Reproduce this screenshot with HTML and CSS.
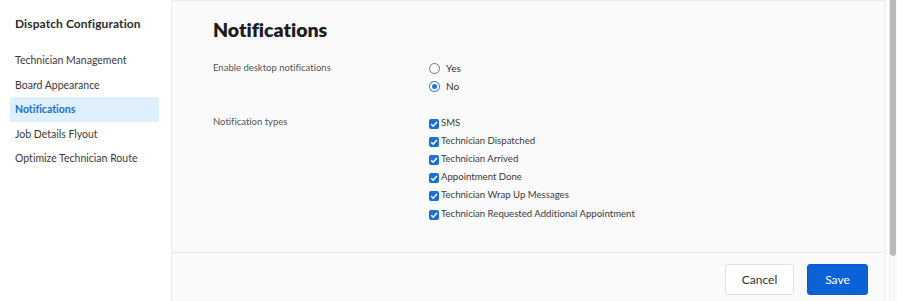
FILE: index.html
```html
<!DOCTYPE html>
<html>
<head>
<meta charset="utf-8">
<link rel="stylesheet" href="styles.css">
</head>
<body>
<div class="app">
  <aside class="sidebar">
    <div class="side-title">Dispatch Configuration</div>
    <nav class="side-nav">
      <a class="side-item">Technician Management</a>
      <a class="side-item">Board Appearance</a>
      <a class="side-item active">Notifications</a>
      <a class="side-item">Job Details Flyout</a>
      <a class="side-item">Optimize Technician Route</a>
    </nav>
  </aside>
  <main class="main">
    <div class="content">
      <h1 class="heading">Notifications</h1>
      <div class="row">
        <div class="label">Enable desktop notifications</div>
        <div class="options radios">
          <label class="opt"><span class="radio"></span>Yes</label>
          <label class="opt"><span class="radio on"></span>No</label>
        </div>
      </div>
      <div class="row row2">
        <div class="label">Notification types</div>
        <div class="options checks">
          <label class="chk"><span class="box"><svg viewBox="0 0 10 10"><path d="M2.2 5.2 L4.2 7.2 L7.9 3" /></svg></span>SMS</label>
          <label class="chk"><span class="box"><svg viewBox="0 0 10 10"><path d="M2.2 5.2 L4.2 7.2 L7.9 3" /></svg></span>Technician Dispatched</label>
          <label class="chk"><span class="box"><svg viewBox="0 0 10 10"><path d="M2.2 5.2 L4.2 7.2 L7.9 3" /></svg></span>Technician Arrived</label>
          <label class="chk"><span class="box"><svg viewBox="0 0 10 10"><path d="M2.2 5.2 L4.2 7.2 L7.9 3" /></svg></span>Appointment Done</label>
          <label class="chk"><span class="box"><svg viewBox="0 0 10 10"><path d="M2.2 5.2 L4.2 7.2 L7.9 3" /></svg></span>Technician Wrap Up Messages</label>
          <label class="chk"><span class="box"><svg viewBox="0 0 10 10"><path d="M2.2 5.2 L4.2 7.2 L7.9 3" /></svg></span>Technician Requested Additional Appointment</label>
        </div>
      </div>
    </div>
    <div class="footer">
      <button class="btn cancel">Cancel</button>
      <button class="btn save">Save</button>
    </div>
  </main>
  <div class="gutter"></div>
  <div class="scrollbar"><div class="thumb"></div></div>
</div>
</body>
</html>
```
FILE: styles.css
```css
html, body { margin: 0; padding: 0; }
body {
  font-family: Lato, "Noto Sans", sans-serif;
  font-variant-ligatures: none;
  color: #333;
  background: #fff;
  width: 897px;
  height: 301px;
  overflow: hidden;
}
.app {
  display: flex;
  height: 301px;
}
.sidebar {
  flex: none;
  border-right: 1px solid #ececec;
  background: #fff;
  box-sizing: border-box;
  width: 172px;
  padding: 16px 12px 0 10px;
}
.side-title {
  font-size: 12px;
  font-weight: 700;
  color: #2b2b2b;
  padding-left: 5px;
  line-height: 16px;
  letter-spacing: 0.1px;
}
.side-nav {
  margin-top: 16px;
  display: flex;
  flex-direction: column;
}
.side-item {
  display: block;
  font-size: 10.5px;
  color: #3a3a3a;
  line-height: 24.6px;
  height: 24.6px;
  padding-left: 5px;
  border-radius: 2px;
}
.side-item.active {
  background: #dff0fd;
  color: #1a6fd8;
  font-weight: 700;
}
.main {
  flex: none;
  width: 714px;
  display: flex;
  flex-direction: column;
  background: #fafafa;
  border-top: 1px solid #ececec;
  border-right: 1px solid #ececec;
  box-sizing: border-box;
}
.content {
  height: 252px;
  box-sizing: border-box;
  padding: 15px 0 0 41px;
  border-bottom: 1px solid #e8e8e8;
}
.heading {
  margin: 0;
  font-size: 19.5px;
  font-weight: 800;
  line-height: 28px;
  color: #1d1d1d;
}
.row {
  display: flex;
  margin-top: 17px;
}
.row2 { margin-top: 20px; }
.label {
  width: 216px;
  flex: none;
  font-size: 9.5px;
  color: #555;
  line-height: 14px;
}
.options {
  display: flex;
  flex-direction: column;
}
.opt {
  display: flex;
  align-items: center;
  font-size: 10px;
  color: #333;
  height: 18px;
}
.radios { margin-top: -2px; }
.radio {
  width: 9px;
  height: 9px;
  border: 1px solid #777;
  border-radius: 50%;
  margin-right: 6px;
  background: #fff;
  box-sizing: content-box;
  position: relative;
}
.radio.on {
  border-color: #1a73e8;
  background: #fff;
}
.radio.on::after {
  content: "";
  position: absolute;
  left: 2px; top: 2px;
  width: 5px; height: 5px;
  border-radius: 50%;
  background: #1a73e8;
}
.checks { margin-top: -2px; }
.chk {
  display: flex;
  align-items: center;
  height: 18.2px;
  font-size: 9.6px;
  color: #3a3a3a;
}
.box {
  width: 10px;
  height: 10px;
  border-radius: 2px;
  background: #1a6fd8;
  margin-right: 2px;
  margin-top: 3px;
  display: flex;
}
.box svg {
  width: 10px;
  height: 10px;
}
.box path {
  fill: none;
  stroke: #fff;
  stroke-width: 1.6;
}
.footer {
  flex: 1;
  display: flex;
  justify-content: flex-end;
  align-items: flex-start;
  padding: 11px 17px 0 0;
  gap: 13px;
}
.btn {
  height: 31px;
  border-radius: 3px;
  font-family: Lato, sans-serif;
  font-size: 12px;
  padding: 0;
  cursor: pointer;
}
.cancel {
  width: 69px;
  background: #fff;
  border: 1px solid #e2e2e2;
  color: #333;
}
.save {
  width: 61px;
  background: #0b62d6;
  border: 1px solid #0b5cc8;
  color: #fff;
}
.gutter {
  width: 3px;
  flex: none;
  background: #fff;
}
.scrollbar {
  width: 8px;
  flex: none;
  background: #fafafa;
  border-left: 1px solid #eee;
  box-sizing: border-box;
}
.thumb {
  width: 6px;
  height: 256px;
  background: #b9b9b9;
  border-radius: 0 0 3px 3px;
}
```
